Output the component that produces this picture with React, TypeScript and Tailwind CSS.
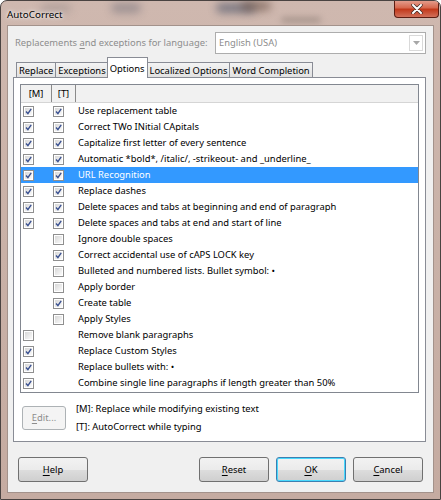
import React from 'react';

type Row = { label: string; m: boolean | null; t: boolean | null; selected?: boolean };

const ROWS: Row[] = [
    { label: 'Use replacement table', m: true, t: true },
    { label: 'Correct TWo INitial CApitals', m: true, t: true },
    { label: 'Capitalize first letter of every sentence', m: true, t: true },
    { label: 'Automatic *bold*, /italic/, -strikeout- and _underline_', m: true, t: true },
    { label: 'URL Recognition', m: true, t: true, selected: true },
    { label: 'Replace dashes', m: true, t: true },
    { label: 'Delete spaces and tabs at beginning and end of paragraph', m: true, t: true },
    { label: 'Delete spaces and tabs at end and start of line', m: true, t: true },
    { label: 'Ignore double spaces', m: null, t: false },
    { label: 'Correct accidental use of cAPS LOCK key', m: null, t: true },
    { label: 'Bulleted and numbered lists. Bullet symbol: •', m: null, t: false },
    { label: 'Apply border', m: null, t: false },
    { label: 'Create table', m: null, t: true },
    { label: 'Apply Styles', m: null, t: false },
    { label: 'Remove blank paragraphs', m: false, t: null },
    { label: 'Replace Custom Styles', m: true, t: null },
    { label: 'Replace bullets with: •', m: true, t: null },
    { label: 'Combine single line paragraphs if length greater than 50%', m: true, t: null },
];

const TABS = ['Replace', 'Exceptions', 'Options', 'Localized Options', 'Word Completion'];

function CheckBox({ checked }: { checked: boolean }) {
    return (
        <div className="w-[11px] h-[11px] border border-[#8f8f8f] bg-white p-[1px]">
            <div className="w-full h-full bg-gradient-to-br from-[#d8d8d8] to-[#fafafa] relative">
                {checked && (
                    <svg viewBox="0 0 7 7" className="absolute inset-0 w-[7px] h-[7px]">
                        <path d="M1 3.6 L2.9 5.6 L6.2 0.8" fill="none" stroke="#3a5191" strokeWidth="1.4" />
                    </svg>
                )}
            </div>
        </div>
    );
}

function Button({ label, mnemonic, focused }: { label: string; mnemonic: number; focused?: boolean }) {
    return (
        <div
            className={`w-[70px] h-[25px] rounded-[3px] border flex items-center justify-center text-black ${
                focused ? 'border-[#3c7fb1] shadow-[inset_0_0_0_1px_#48d9fd]' : 'border-[#707070]'
            } bg-[linear-gradient(#f2f2f2_0%,#ebebeb_50%,#dddddd_51%,#cfcfcf_100%)]`}
        >
            <span>
                {label.slice(0, mnemonic)}
                <span className="underline underline-offset-2">{label[mnemonic]}</span>
                {label.slice(mnemonic + 1)}
            </span>
        </div>
    );
}

export default function App() {
    return (
        <div
            className="w-[441px] h-[500px] relative rounded-t-[7px] border border-[#4a4341] bg-[linear-gradient(180deg,#cfb8af_0%,#c9b1a7_50%,#c5aba1_100%)] flex flex-col px-[6px] pb-[6px] text-[9.4px] leading-[12px] overflow-hidden"
            style={{ fontFamily: '"Noto Sans", "DejaVu Sans", sans-serif' }}
        >
            {/* blurred desktop behind the glass */}
            <div className="absolute left-[40px] top-[3px] w-[30px] h-[8px] rounded-full bg-[#9c8f8d] blur-[4px] opacity-60" />
            <div className="absolute left-[110px] top-[2px] w-[30px] h-[10px] rounded-full bg-[#7d7880] blur-[4px] opacity-60" />
            <div className="absolute left-[215px] top-[2px] w-[40px] h-[10px] rounded-full bg-[#5a5f70] blur-[4px] opacity-70" />
            <div className="absolute left-[240px] top-[0px] w-[30px] h-[10px] rounded-full bg-[#6b5247] blur-[4px] opacity-60" />
            <div className="absolute left-[280px] top-[16px] w-[40px] h-[6px] rounded-full bg-[#8f7f77] blur-[3px] opacity-60" />

            {/* title bar */}
            <div className="h-[24px] flex items-center relative">
                <span className="pl-[0px] pt-[4px] text-[9.8px] text-black [text-shadow:0_0_6px_#ffffff,0_0_3px_#ffffff]">AutoCorrect</span>
                <div className="absolute right-[-5px] top-[-1px] w-[45px] h-[18px] rounded-b-[4px] border border-[#5c1d12] border-t-0 bg-[linear-gradient(180deg,#e5a394_0%,#d7694f_45%,#c2391b_55%,#d2705a_100%)] flex items-center justify-center">
                    <svg viewBox="0 0 12 10" className="w-[12px] h-[10px]">
                        <path d="M2 1 L10 9 M10 1 L2 9" stroke="#3d2a26" strokeWidth="3.4" strokeLinecap="round" />
                        <path d="M2 1 L10 9 M10 1 L2 9" stroke="#ffffff" strokeWidth="2" strokeLinecap="round" />
                    </svg>
                </div>
            </div>

            {/* client area */}
            <div className="flex-1 bg-[#f0f0f0] border border-[#a3928b] flex flex-col pl-[5px] pr-[7px] pt-[6px] relative">
                {/* language row */}
                <div className="flex items-center justify-between pl-[2px]">
                    <span className="text-[#8d8d8d]">
                        Replacements <span className="underline underline-offset-2">a</span>nd exceptions for language:
                    </span>
                    <div className="w-[211px] h-[22px] border border-[#adadad] bg-white flex items-center justify-between pl-[3px] pr-[2px]">
                        <span className="text-[#8d8d8d]">English (USA)</span>
                        <div className="w-[14px] h-[16px] border border-[#d9d9d9] flex items-center justify-center">
                            <svg viewBox="0 0 7 4" className="w-[7px] h-[4px]">
                                <path d="M0 0 L7 0 L3.5 4 Z" fill="#a7a7a7" />
                            </svg>
                        </div>
                    </div>
                </div>

                {/* tabs */}
                <div className="flex items-end pl-[3px] mt-[3px] h-[20px] relative z-10">
                    {TABS.map((t) =>
                        t === 'Options' ? (
                            <div
                                key={t}
                                className="h-[21px] -mb-[1px] px-[2px] border border-[#898c95] border-b-0 bg-white flex items-center mx-[-1px] relative z-10"
                            >
                                <span className="pt-[2px]">{t}</span>
                            </div>
                        ) : (
                            <div
                                key={t}
                                className="h-[15px] px-[2px] border border-[#898c95] border-b-0 -mr-[1px] bg-[linear-gradient(#f3f3f3,#e1e1e1)] flex items-center"
                            >
                                <span className="pt-[1px]">{t}</span>
                            </div>
                        )
                    )}
                </div>

                {/* tab panel */}
                <div className="border border-[#898c95] bg-white flex flex-col px-[6px] pt-[6px] h-[365px]">
                    {/* list */}
                    <div className="border border-[#828790] bg-white h-[309px] flex flex-col">
                        <div className="h-[18px] flex bg-[#f1f1f1] border-b border-[#d5d5d5] shrink-0">
                            <div className="w-[31px] border-r border-[#8a8a8a] flex items-center justify-center">[M]</div>
                            <div className="w-[24px] border-r border-[#8a8a8a] flex items-center justify-center">[T]</div>
                            <div className="flex-1" />
                        </div>
                        {ROWS.map((r) => (
                            <div
                                key={r.label}
                                className={`h-[16px] flex items-center shrink-0 ${r.selected ? 'bg-[#3399ff] text-white' : 'text-black'}`}
                            >
                                <div className="w-[31px] flex pl-[2px]">{r.m !== null && <CheckBox checked={r.m} />}</div>
                                <div className="w-[24px] flex pl-[1px]">{r.t !== null && <CheckBox checked={r.t} />}</div>
                                <span className="pl-[2px] whitespace-nowrap">{r.label}</span>
                            </div>
                        ))}
                    </div>

                    {/* footer of panel */}
                    <div className="flex mt-[13px] pl-[2px]">
                        <div className="w-[44px] h-[24px] rounded-[3px] border border-[#adb2b5] bg-[#f4f4f4] flex items-center justify-center text-[#8d8d8d]">
                            <span>
                                <span className="underline underline-offset-2">E</span>dit...
                            </span>
                        </div>
                        <div className="flex flex-col gap-[6px] pl-[10px] -mt-[3px]">
                            <span>[M]: Replace while modifying existing text</span>
                            <span>[T]: AutoCorrect while typing</span>
                        </div>
                    </div>
                </div>

                {/* dialog buttons */}
                <div className="flex mt-[15px] pl-[5px] pr-[3px]">
                    <Button label="Help" mnemonic={0} />
                    <div className="flex-1" />
                    <div className="flex gap-[7px]">
                        <Button label="Reset" mnemonic={0} />
                        <Button label="OK" mnemonic={0} focused />
                        <Button label="Cancel" mnemonic={0} />
                    </div>
                </div>
            </div>
        </div>
    );
}
